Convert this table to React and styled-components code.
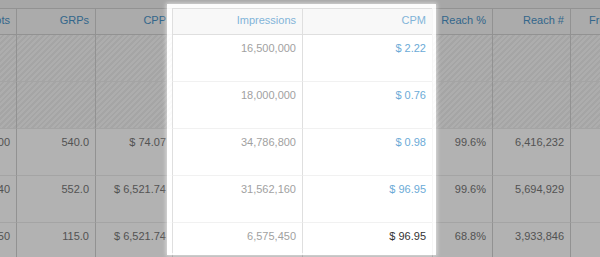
import styled, { createGlobalStyle } from 'styled-components';

const GlobalStyle = createGlobalStyle`
  body {
    margin: 0;
    background: #fff;
    font-family: "Liberation Sans", Arial, sans-serif;
    font-size: 11px;
    overflow: hidden;
  }
`;

const Viewport = styled.div`
  position: relative;
  width: 600px;
  height: 257px;
  overflow: hidden;
  background: #fff;
`;

const TopBar = styled.div`
  height: 8px;
  background: #efefef;
`;

const Grid = styled.div`
  display: grid;
  grid-template-columns: 80px 79px 77px 130px 130px 60px 78px 77px;
  width: max-content;
  margin-left: -64px;
`;

const HeadCell = styled.div`
  height: 21px;
  padding: 4px 6px 0 0;
  line-height: 14px;
  text-align: right;
  white-space: nowrap;
  color: #4a93c8;
  background: #f5f5f5;
  border-top: 1px solid #d2d2d2;
  border-bottom: 1px solid #d2d2d2;
  border-left: 1px solid #d2d2d2;
`;

const Cell = styled.div`
  height: 40px;
  padding: 6px 6px 0 0;
  line-height: 14px;
  text-align: right;
  white-space: nowrap;
  color: ${({ $accent }) => ($accent ? '#2986c6' : '#777')};
  border-left: 1px solid #d2d2d2;
  border-bottom: 1px solid #ebebeb;
  background: ${({ $empty }) =>
    $empty
      ? 'repeating-linear-gradient(135deg, #f8f8f8 0 2px, #ececec 2px 4px)'
      : '#fff'};
`;

const Focused = styled.span`
  position: relative;
  z-index: 2;
  color: #333;
`;

const Spotlight = styled.div`
  position: absolute;
  left: 167px;
  top: 4px;
  width: 269px;
  height: 251px;
  box-sizing: border-box;
  z-index: 1;
  pointer-events: none;
  border-style: solid;
  border-color: rgba(255, 255, 255, 0.7);
  border-width: 4px 4px 2px 5px;
  background: rgba(255, 255, 255, 0.3);
  box-shadow: 0 0 4px 1px rgba(255, 255, 255, 0.55),
    0 0 0 1200px rgba(0, 0, 0, 0.3);
`;

const columns = ['Spots', 'GRPs', 'CPP', 'Impressions', 'CPM', 'Reach %', 'Reach #', 'Frequency'];

// index 4 is the CPM column, shown in blue
const rows = [
  ['', '', '', '16,500,000', '$ 2.22', '', '', ''],
  ['', '', '', '18,000,000', '$ 0.76', '', '', ''],
  ['1,200', '540.0', '$ 74.07', '34,786,800', '$ 0.98', '99.6%', '6,416,232', '4.2'],
  ['1,140', '552.0', '$ 6,521.74', '31,562,160', '$ 96.95', '99.6%', '5,694,929', '4.1'],
  ['650', '115.0', '$ 6,521.74', '6,575,450', null, '68.8%', '3,933,846', '1.7'],
];

export default function App() {
  return (
    <Viewport>
      <GlobalStyle />
      <TopBar />
      <Grid>
        {columns.map((c) => (
          <HeadCell key={c}>{c}</HeadCell>
        ))}
        {rows.map((row, r) =>
          row.map((value, i) => (
            <Cell key={`${r}-${i}`} $empty={value === ''} $accent={i === 4}>
              {value === null ? <Focused>$ 96.95</Focused> : value}
            </Cell>
          ))
        )}
      </Grid>
      <Spotlight />
    </Viewport>
  );
}
